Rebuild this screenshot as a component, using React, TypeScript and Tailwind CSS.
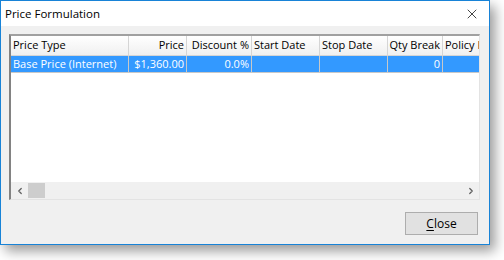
import { X, ChevronLeft, ChevronRight } from "lucide-react";

const cols = [
    { title: "Price Type", w: 118, align: "left", value: "Base Price (Internet)" },
    { title: "Price", w: 58, align: "right", value: "$1,360.00" },
    { title: "Discount %", w: 65, align: "right", value: "0.0%" },
    { title: "Start Date", w: 68, align: "left", value: "" },
    { title: "Stop Date", w: 68, align: "left", value: "" },
    { title: "Qty Break", w: 55, align: "right", value: "0" },
    { title: "Policy Rule", w: 70, align: "left", value: "" },
];

export default function App() {
    return (
        <div className="w-[504px] h-[260px] bg-white" style={{ fontFamily: "'Open Sans', 'Noto Sans', sans-serif" }}>
            <div className="w-[490px] h-[245px] flex flex-col border border-[#1883d7] bg-[#f0f0f0] shadow-[5px_6px_12px_rgba(0,0,0,0.4)]">
                {/* title bar */}
                <div className="h-[25px] bg-white flex items-center justify-between pl-[4px] pr-[9px]">
                    <span className="text-[11.5px] text-black leading-none">Price Formulation</span>
                    <X size={16} strokeWidth={1.1} className="text-black" />
                </div>

                <div className="flex-1 flex flex-col pt-[8px] pl-[8px] pr-[9px] pb-[9px]">
                    {/* grid */}
                    <div className="h-[166px] flex flex-col border-t-2 border-l-2 border-t-[#a0a0a0] border-l-[#828282] border-r border-b border-r-[#e3e3e3] border-b-[#e3e3e3] bg-white overflow-hidden">
                        <div className="flex h-[20px] bg-gradient-to-b from-white to-[#f0f0f0] border-b border-[#d5d5d5] text-[11px] text-black">
                            {cols.map((c) => (
                                <div
                                    key={c.title}
                                    className={`shrink-0 px-[2px] flex items-center whitespace-nowrap overflow-hidden border-r border-[#d5d5d5] ${c.align === "right" ? "justify-end" : "justify-start"}`}
                                    style={{ width: c.w }}
                                >
                                    {c.title}
                                </div>
                            ))}
                        </div>
                        <div className="flex h-[17px] bg-[#3399ff] border-b border-[#c8c8c8] text-[11px] text-white">
                            {cols.map((c) => (
                                <div
                                    key={c.title}
                                    className={`shrink-0 px-[2px] flex items-center whitespace-nowrap overflow-hidden border-r border-[#c8c8c8] ${c.align === "right" ? "justify-end" : "justify-start"}`}
                                    style={{ width: c.w }}
                                >
                                    {c.value}
                                </div>
                            ))}
                        </div>
                        <div className="flex-1" />
                        {/* horizontal scrollbar */}
                        <div className="h-[17px] bg-[#f0f0f0] flex items-center">
                            <div className="w-[17px] h-[17px] flex items-center justify-center text-[#606060]">
                                <ChevronLeft size={10} strokeWidth={3} />
                            </div>
                            <div className="w-[17px] h-[15px] bg-[#cdcdcd]" />
                            <div className="flex-1" />
                            <div className="w-[17px] h-[17px] flex items-center justify-center text-[#606060]">
                                <ChevronRight size={10} strokeWidth={3} />
                            </div>
                        </div>
                    </div>

                    <div className="flex-1 flex items-end justify-end pr-[2px]">
                        <button className="w-[73px] h-[23px] bg-[#e1e1e1] border border-[#adadad] text-[12px] text-black leading-none">
                            <span className="underline underline-offset-2">C</span>lose
                        </button>
                    </div>
                </div>
            </div>
        </div>
    );
}
